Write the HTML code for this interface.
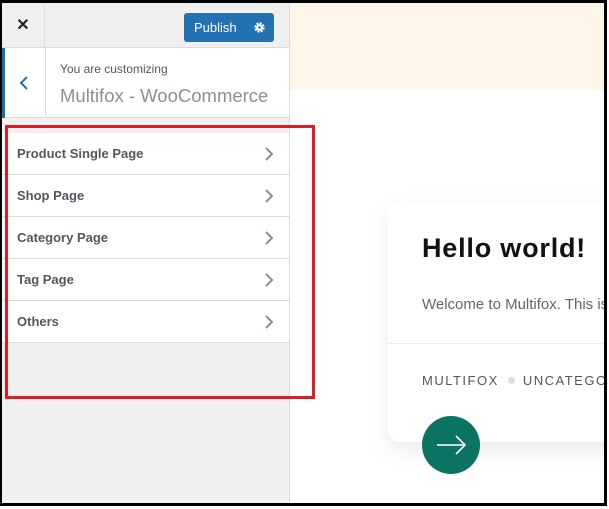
<!DOCTYPE html>
<html><head><style>
*{margin:0;padding:0;box-sizing:border-box}
body{width:609px;height:509px;background:#fff;position:relative;overflow:hidden;font-family:"Liberation Sans",sans-serif}
.frame{position:absolute;left:0;top:0;width:607px;height:506px;border:3px solid #000;border-left-width:2px;overflow:hidden;background:#fff}
.side{position:absolute;left:0;top:0;width:288px;height:503px;background:#f0f0f1;border-right:1px solid #dcdcde}
.top{position:absolute;left:0;top:0;width:287px;height:45px;border-bottom:1px solid #dcdcde}
.x{position:absolute;left:0;top:0;width:43px;height:45px;border-right:1px solid #dcdcde;font-size:16px;font-weight:bold;text-align:center;line-height:45px;color:#1d2327}
.pub{position:absolute;left:182px;top:10px;width:90px;height:29px;background:#2271b1;border-radius:3px;color:#fff;font-size:13px;line-height:29px;padding-left:10px}
.cust{position:absolute;left:0;top:45px;width:287px;height:70px;background:#fff;border-bottom:1px solid #dcdcde}
.stripe{position:absolute;left:0;top:0;width:3px;height:70px;background:#2271b1}
.back{position:absolute;left:3px;top:0;width:41px;height:70px;border-right:1px solid #dcdcde}
.c1{position:absolute;left:58px;top:14px;font-size:12px;color:#50575e}
.c2{position:absolute;left:58px;top:37px;font-size:18.5px;color:#8c8f94}
.item{position:absolute;left:0;width:287px;height:42px;background:#fff;border-bottom:1px solid #dcdcde;font-size:13px;font-weight:bold;color:#50575e;padding-left:15px;line-height:41px}
.item svg{position:absolute;right:15px;top:14px}
.red{position:absolute;left:3px;top:122px;width:310px;height:274px;border:3px solid #e01b24}
.peach{position:absolute;left:288px;top:0;width:320px;height:87px;background:#fff6ea}
.card{position:absolute;left:386px;top:199px;width:260px;height:240px;background:#fff;border-radius:12px;box-shadow:0 8px 24px rgba(0,0,0,.08)}
.h{position:absolute;left:34px;top:31px;font-size:27px;letter-spacing:0.8px;font-weight:bold;color:#111;white-space:nowrap}
.p{position:absolute;left:34px;top:94px;font-size:15px;color:#666;white-space:nowrap}
.div{position:absolute;left:0;top:141px;width:260px;height:1px;background:#f5ecdf}
.meta{position:absolute;left:34px;top:171px;font-size:13px;letter-spacing:1.5px;color:#555;white-space:nowrap}
.dot{display:inline-block;width:7px;height:7px;border-radius:50%;background:#ddd;margin:0 8px 1px 4px}
.circ{position:absolute;left:420px;top:413px;width:58px;height:58px;border-radius:50%;background:#0b7362}
</style></head><body>
<div class="frame">
<div class="peach"></div>
<div class="card"><div class="h">Hello world!</div><div class="p">Welcome to Multifox. This is your first post.</div><div class="div"></div><div class="meta">MULTIFOX <span class="dot"></span>UNCATEGORIZED</div></div>
<div class="circ"><svg width="58" height="58"><path d="M15 29H43M34 20L43 29L34 38" stroke="#fff" stroke-width="1.6" fill="none"/></svg></div>
<div class="side">
<div class="top"><div class="x">✕</div><div class="pub">Publish<svg style="position:absolute;right:8px;top:8px" width="13" height="13" viewBox="0 0 20 20"><circle cx="10" cy="10" r="6" fill="none" stroke="#fff" stroke-width="4" stroke-dasharray="3 1.7"/><circle cx="10" cy="10" r="5" fill="#fff"/><circle cx="10" cy="10" r="2" fill="#2271b1"/></svg></div></div>
<div class="cust"><div class="stripe"></div><div class="back"><svg style="position:absolute;left:14px;top:28px" width="10" height="14"><path d="M8 1L2 7L8 13" stroke="#2271b1" stroke-width="2" fill="none"/></svg></div><div class="c1">You are customizing</div><div class="c2">Multifox - WooCommerce</div></div>
<div class="item" style="top:130px">Product Single Page<svg width="9" height="14"><path d="M1 1L7 7L1 13" stroke="#8c8f94" stroke-width="2" fill="none"/></svg></div>
<div class="item" style="top:172px">Shop Page<svg width="9" height="14"><path d="M1 1L7 7L1 13" stroke="#8c8f94" stroke-width="2" fill="none"/></svg></div>
<div class="item" style="top:214px">Category Page<svg width="9" height="14"><path d="M1 1L7 7L1 13" stroke="#8c8f94" stroke-width="2" fill="none"/></svg></div>
<div class="item" style="top:256px">Tag Page<svg width="9" height="14"><path d="M1 1L7 7L1 13" stroke="#8c8f94" stroke-width="2" fill="none"/></svg></div>
<div class="item" style="top:298px">Others<svg width="9" height="14"><path d="M1 1L7 7L1 13" stroke="#8c8f94" stroke-width="2" fill="none"/></svg></div>
</div>
<div class="red"></div>
</div>
</body></html>
